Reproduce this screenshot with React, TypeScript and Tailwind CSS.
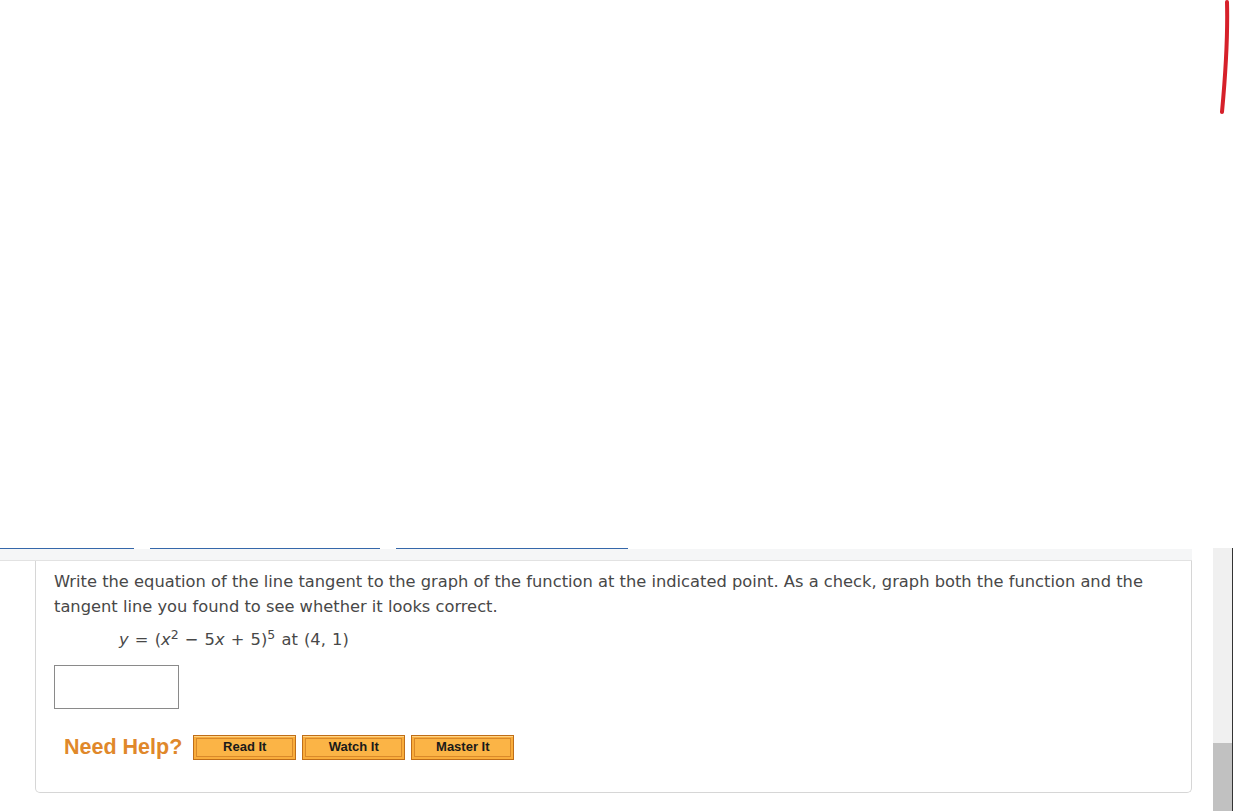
import React from 'react';

const HelpButton = ({ label }: { label: string }) => (
  <button className="h-[25px] w-[103px] border border-[#bf6e18] bg-[#f9ad3c] p-[2px] shadow-[inset_0_1px_0_#ffd488]">
    <span className="flex h-full w-full items-center justify-center border border-[#d9892a] bg-[#fbb446] font-['Liberation_Sans',Arial,sans-serif] text-[13px] font-bold text-[#1a1a1a]">
      {label}
    </span>
  </button>
);

export default function App() {
  return (
    <div className="relative flex h-[811px] w-[1233px] flex-col overflow-hidden bg-white font-['DejaVu_Sans',Verdana,sans-serif]">
      {/* pen mark top right */}
      <svg className="absolute right-0 top-0" width="30" height="120" viewBox="0 0 30 120">
        <path d="M24 2 C 25 40, 22 80, 19 112" stroke="#d6202a" strokeWidth="4" strokeLinecap="round" fill="none" />
      </svg>

      <div className="h-[548px] shrink-0" />

      <div className="flex flex-1">
        <div className="flex flex-1 flex-col">
          {/* tab underline segments */}
          <div className="flex h-px gap-[16px]">
            <div className="w-[134px] bg-[#3567aa]" />
            <div className="w-[230px] bg-[#3567aa]" />
            <div className="w-[232px] bg-[#3567aa]" />
          </div>
          <div className="mr-[21px] h-[12px] border-b border-[#e2e2e2] bg-[#f5f6f7]" />

          <div className="mb-[18px] ml-[35px] mr-[21px] flex flex-1 flex-col rounded-b-[5px] border-x border-b border-[#d6d6d6] px-[18px] pt-[8px]">
            <p className="text-[16.3px] leading-[25px] text-[#484848]">
              Write the equation of the line tangent to the graph of the function at the indicated point. As a check, graph both the function and the tangent line you found to see whether it looks correct.
            </p>
            <div className="ml-[65px] mt-[8px] text-[16.3px] leading-[25px] text-[#484848] [word-spacing:1px]">
              <i>y</i> = (<i>x</i>
              <sup className="text-[12.5px]">2</sup> − 5<i>x</i> + 5)
              <sup className="text-[12.5px]">5</sup> at (4, 1)
            </div>
            <div className="mt-[13px] h-[44px] w-[125px] border border-[#8a8a8a]" />
            <div className="ml-[10px] mt-[22px] flex items-center gap-[6px]">
              <span className="mr-[5px] font-['Liberation_Sans',Arial,sans-serif] text-[21.5px] font-bold text-[#e0882a]">
                Need Help?
              </span>
              <HelpButton label="Read It" />
              <HelpButton label="Watch It" />
              <HelpButton label="Master It" />
            </div>
          </div>
        </div>

        {/* scrollbar */}
        <div className="flex w-[20px] flex-col border-r border-[#333] bg-[#f0f0f0]">
          <div className="h-[195px]" />
          <div className="flex-1 bg-[#c1c1c1]" />
        </div>
      </div>
    </div>
  );
}
